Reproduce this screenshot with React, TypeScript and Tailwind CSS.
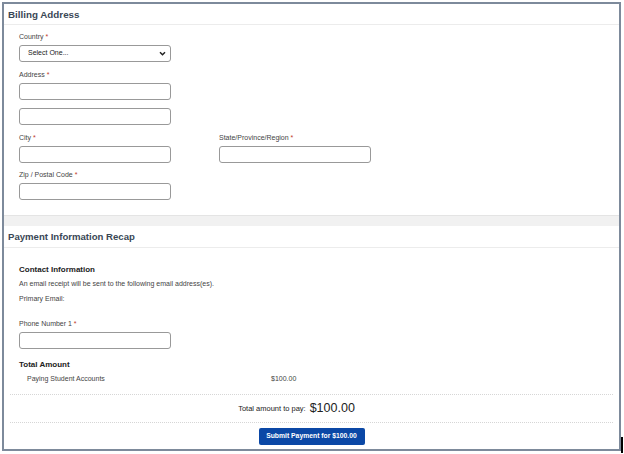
import React from 'react';

function Req() {
    return <span className="text-[#c0392b]"> *</span>;
}

function Label({ children, className = '' }: { children: React.ReactNode; className?: string }) {
    return (
        <div className={`text-[7px] leading-[10px] text-[#444] ${className}`}>
            {children}
            <Req />
        </div>
    );
}

function Input({ className = '' }: { className?: string }) {
    return <div className={`h-[17px] w-[152px] rounded-[3px] border border-[#999] bg-white ${className}`} />;
}

function Field({ label, className = '' }: { label: string; className?: string }) {
    return (
        <div className={className}>
            <Label>{label}</Label>
            <Input className="mt-[3px]" />
        </div>
    );
}

export default function App() {
    return (
        <div className="relative h-[454px] w-[624px] bg-white font-['Liberation_Sans',Arial,sans-serif]">
            <div className="absolute left-[2px] top-[2px] h-[449px] w-[619px] overflow-hidden border-2 border-[#7d8a9b] bg-white">
                {/* Billing Address */}
                <div className="h-[21px] border-b border-[#ececec] pl-[4px] pt-[5px] text-[9.8px] font-bold leading-[12px] text-[#3a4756]">
                    Billing Address
                </div>
                <div className="pl-[15px] pt-[7px]">
                    <Label>Country</Label>
                    <div className="mt-[3px] flex h-[17px] w-[152px] items-center justify-between rounded-[3px] border border-[#999] bg-white pl-[8px] pr-[4px]">
                        <span className="text-[7px] text-[#222]">Select One...</span>
                        <svg width="7" height="5" viewBox="0 0 8 6">
                            <path d="M1 1.5 L4 4.5 L7 1.5" fill="none" stroke="#222" strokeWidth="1.8" />
                        </svg>
                    </div>
                    <Label className="mt-[8px]">Address</Label>
                    <Input className="mt-[3px]" />
                    <Input className="mt-[8px]" />
                    <div className="mt-[8px] flex gap-[48px]">
                        <Field label="City" />
                        <Field label="State/Province/Region" />
                    </div>
                    <Field label="Zip / Postal Code" className="mt-[7px]" />
                </div>
                <div className="mt-[15px] h-[11px] border-t border-[#e4e4e4] bg-[#f1f1f1]" />

                {/* Payment Information Recap */}
                <div className="h-[22px] border-b border-[#ececec] pl-[4px] pt-[5px] text-[9.6px] font-bold leading-[12px] text-[#3a4756]">
                    Payment Information Recap
                </div>
                <div className="pl-[15px] pt-[17px]">
                    <div className="text-[8px] font-bold leading-[10px] text-[#222]">Contact Information</div>
                    <div className="mt-[4px] text-[7px] leading-[10px] text-[#444]">
                        An email receipt will be sent to the following email address(es).
                    </div>
                    <div className="mt-[5px] text-[7px] leading-[10px] text-[#444]">Primary Email:</div>
                    <Field label="Phone Number 1" className="mt-[15px]" />
                    <div className="mt-[11px] text-[8px] font-bold leading-[10px] text-[#222]">Total Amount</div>
                    <div className="mt-[4px] flex pl-[8px] text-[7px] leading-[10px] text-[#444]">
                        <span className="w-[244px]">Paying Student Accounts</span>
                        <span>$100.00</span>
                    </div>
                </div>
                <div className="mx-[6px] mt-[10px] border-t border-dotted border-[#d6d6d6]" />
                <div className="flex h-[27px] items-center justify-center gap-[4px] pr-[30px] text-[#222]">
                    <span className="text-[7.5px]">Total amount to pay:</span>
                    <span className="text-[12.5px]">$100.00</span>
                </div>
                <div className="mx-[6px] border-t border-dotted border-[#d6d6d6]" />
                <div className="mt-[5px] flex justify-center">
                    <div className="flex h-[17px] w-[106px] items-center justify-center rounded-[2px] bg-[#0b48a6] text-[6.8px] font-bold text-white">
                        Submit Payment for $100.00
                    </div>
                </div>
            </div>
            <div className="absolute left-[621px] top-[437px] h-[16px] w-[2px] bg-black" />
        </div>
    );
}
